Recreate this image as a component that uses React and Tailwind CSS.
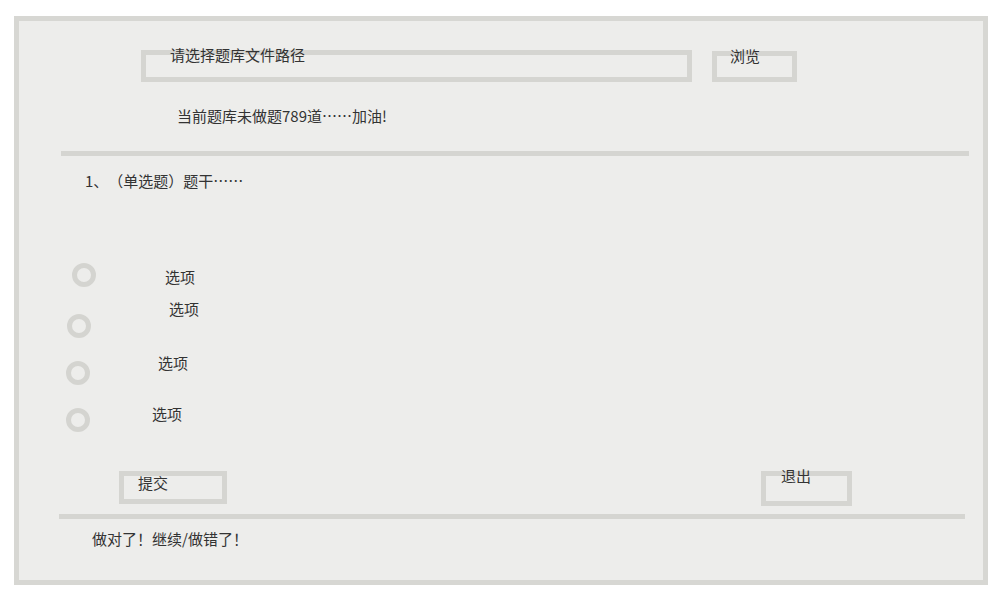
export default function App() {
  const font = { fontFamily: '"Noto Sans CJK SC", "Noto Sans", sans-serif' };
  const ring = "w-[24px] h-[24px] rounded-full border-[5px] border-[#d4d4d0] shrink-0";
  return (
    <div className="w-[1000px] h-[600px] bg-white pt-[16px] pl-[14px] text-[#333] text-[15px] leading-[20px] [text-spacing-trim:space-all]" style={font}>
      <div className="w-[974px] h-[569px] border-[5px] border-[#d7d7d3] bg-[#ededeb] flex flex-col">
        {/* path row */}
        <div className="flex items-start mt-[29px] ml-[122px]">
          <div className="w-[551px] h-[32px] border-[5px] border-[#d5d5d1]">
            <div className="-mt-[10px] ml-[24px] whitespace-nowrap">请选择题库文件路径</div>
          </div>
          <div className="ml-[20px] w-[85px] h-[31px] border-[5px] border-[#d5d5d1] mt-[1px]">
            <div className="-mt-[10px] ml-[13px] whitespace-nowrap">浏览</div>
          </div>
        </div>
        <div className="mt-[24px] ml-[158px] whitespace-nowrap">当前题库未做题789道……加油!</div>
        <div className="mt-[25px] ml-[42px] w-[908px] h-[5px] bg-[#d5d5d1]" />
        <div className="mt-[15px] ml-[66px] whitespace-nowrap">1、（单选题）题干……</div>
        {/* options */}
        <div className="mt-[72px] flex flex-col">
          <div className="flex items-start h-[36px]">
            <div className={`${ring} ml-[53px]`} />
            <div className="ml-[69px] mt-[4px]">选项</div>
          </div>
          <div className="flex items-start h-[54px]">
            <div className={`${ring} ml-[48px] mt-[15px]`} />
            <div className="ml-[78px]">选项</div>
          </div>
          <div className="flex items-start h-[51px]">
            <div className={`${ring} ml-[47px] mt-[8px]`} />
            <div className="ml-[68px]">选项</div>
          </div>
          <div className="flex items-start h-[28px]">
            <div className={`${ring} ml-[47px] mt-[4px]`} />
            <div className="ml-[62px]">选项</div>
          </div>
        </div>
        {/* buttons */}
        <div className="mt-[39px] flex items-start">
          <div className="ml-[100px] w-[108px] h-[33px] border-[5px] border-[#d5d5d1]">
            <div className="-mt-[3px] ml-[14px]">提交</div>
          </div>
          <div className="ml-[534px] w-[91px] h-[35px] border-[5px] border-[#d5d5d1]">
            <div className="-mt-[10px] ml-[15px]">退出</div>
          </div>
        </div>
        <div className="mt-[8px] ml-[40px] w-[906px] h-[5px] bg-[#d5d5d1]" />
        <div className="mt-[10px] ml-[73px] whitespace-nowrap">做对了！继续/做错了！</div>
      </div>
    </div>
  );
}
